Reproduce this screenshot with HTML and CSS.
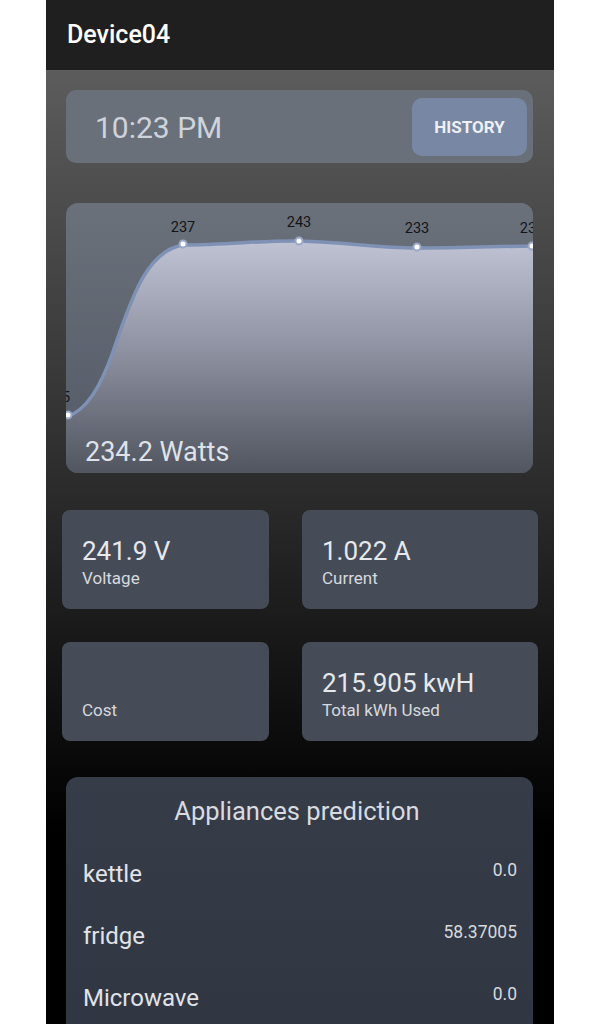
FILE: index.html
```html
<!DOCTYPE html>
<html>
<head>
<meta charset="utf-8">
<title>Device04</title>
<link rel="stylesheet" href="styles.css">
</head>
<body>
<div class="phone">
  <header class="appbar"><h1 class="title">Device04</h1></header>
  <main class="content">
    <section class="time-card">
      <span class="time">10:23 PM</span>
      <button class="history">HISTORY</button>
    </section>

    <section class="chart-card">
      <svg class="chart" viewBox="0 0 467 270" width="467" height="270">
        <defs>
          <linearGradient id="areaFill" x1="0" y1="40" x2="0" y2="270" gradientUnits="userSpaceOnUse">
            <stop offset="0" stop-color="#bec2d3"/>
            <stop offset="0.45" stop-color="#8f93a3"/>
            <stop offset="1" stop-color="#50555f"/>
          </linearGradient>
        </defs>
        <path d="M0,214 C20,208 35,185 50,140 C65,98 80,48 117,42 C160,42 200,37 233,38 C280,39 310,45 351,45 C400,45 440,43 470,43 L470,270 L0,270 Z" fill="url(#areaFill)"/>
        <path d="M0,214 C20,208 35,185 50,140 C65,98 80,48 117,42 C160,42 200,37 233,38 C280,39 310,45 351,45 C400,45 440,43 470,43" fill="none" stroke="#7f92b6" stroke-width="3.5"/>
        <g class="dots">
          <circle cx="2" cy="212" r="3.5"/>
          <circle cx="117" cy="41" r="3.5"/>
          <circle cx="233" cy="38" r="3.5"/>
          <circle cx="351" cy="44" r="3.5"/>
          <circle cx="466" cy="43" r="3.5"/>
        </g>
        <g class="labels">
          <text x="0" y="199">5</text>
          <text x="117" y="29">237</text>
          <text x="233" y="24">243</text>
          <text x="351" y="30">233</text>
          <text x="466" y="30">235</text>
        </g>
      </svg>
      <div class="watts">234.2 Watts</div>
    </section>

    <section class="stats">
      <div class="stat"><div class="val">241.9 V</div><div class="lbl">Voltage</div></div>
      <div class="stat"><div class="val">1.022 A</div><div class="lbl">Current</div></div>
      <div class="stat"><div class="val"></div><div class="lbl">Cost</div></div>
      <div class="stat"><div class="val">215.905 kwH</div><div class="lbl">Total kWh Used</div></div>
    </section>

    <section class="appliances">
      <h2 class="app-title">Appliances prediction</h2>
      <div class="row"><span class="name">kettle</span><span class="num">0.0</span></div>
      <div class="row"><span class="name">fridge</span><span class="num">58.37005</span></div>
      <div class="row"><span class="name">Microwave</span><span class="num">0.0</span></div>
    </section>
  </main>
</div>
</body>
</html>
```

FILE: styles.css
```css
html, body {
  margin: 0;
  background: #ffffff;
}

body {
  font-family: Roboto, "Liberation Sans", sans-serif;
}

.phone {
  width: 508px;
  height: 1024px;
  margin-left: 46px;
  overflow: hidden;
  background: #000;
}

.appbar {
  height: 70px;
  background: #1f1f1f;
  display: flex;
  align-items: center;
  padding-left: 21px;
}

.title {
  margin: 0;
  font-size: 25px;
  line-height: 30px;
  font-weight: 500;
  color: #ffffff;
}

.content {
  height: 954px;
  box-sizing: border-box;
  padding-top: 20px;
  background: linear-gradient(to bottom, #5c5c5c 0px, #2a2a2a 430px, #000000 760px);
}

.time-card {
  margin: 0 21px 0 20px;
  height: 73px;
  background: #6a707a;
  border-radius: 10px;
  display: flex;
  align-items: center;
  justify-content: space-between;
  padding: 0 6px 0 29px;
}

.time {
  font-size: 30px;
  line-height: 36px;
  padding-top: 3px;
  color: #cfd3db;
}

.history {
  width: 115px;
  height: 58px;
  border: 0;
  border-radius: 10px;
  background: #7787a4;
  color: #eef0f5;
  font-family: Roboto, "Liberation Sans", sans-serif;
  font-weight: 700;
  font-size: 17px;
  padding: 0;
}

.chart-card {
  position: relative;
  margin: 40px 21px 0 20px;
  height: 270px;
  border-radius: 12px;
  overflow: hidden;
  background: linear-gradient(to bottom, #6b717b, #545a65);
  display: flex;
  align-items: flex-end;
}

.chart {
  position: absolute;
  left: 0;
  top: 0;
}

.dots circle {
  fill: #ffffff;
  stroke: #9aa8c6;
  stroke-width: 2;
}

.labels text {
  font-family: Roboto, "Liberation Sans", sans-serif;
  font-size: 14.5px;
  fill: #121418;
  text-anchor: middle;
}

.watts {
  position: relative;
  padding: 0 0 6px 19px;
  font-size: 27px;
  line-height: 30px;
  color: #dfe2e8;
}

.stats {
  display: grid;
  grid-template-columns: 207px 236px;
  gap: 33px;
  margin: 37px 16px 0 16px;
}

.stat {
  height: 99px;
  box-sizing: border-box;
  padding: 26px 20px 0;
  background: #464c57;
  border-radius: 8px;
}

.val {
  height: 30px;
  font-size: 26px;
  line-height: 30px;
  color: #e6e8ec;
}

.lbl {
  margin-top: 2px;
  font-size: 17px;
  line-height: 20px;
  color: #d6d9de;
}

.appliances {
  margin: 36px 21px 0 20px;
  height: 300px;
  padding: 20px 16px 0 17px;
  background: linear-gradient(to bottom, #373d48, #2f3540);
  border-radius: 12px 12px 0 0;
}

.app-title {
  margin: 0 6px 18px 0;
  text-align: center;
  font-size: 25.5px;
  line-height: 28px;
  font-weight: 400;
  color: #d8dbe0;
}

.row {
  height: 62px;
  display: flex;
  align-items: center;
  justify-content: space-between;
}

.name {
  font-size: 24px;
  line-height: 28px;
  color: #e0e3e8;
}

.num {
  font-size: 17.5px;
  line-height: 20px;
  margin-top: -8px;
  color: #d6d9de;
}
```
